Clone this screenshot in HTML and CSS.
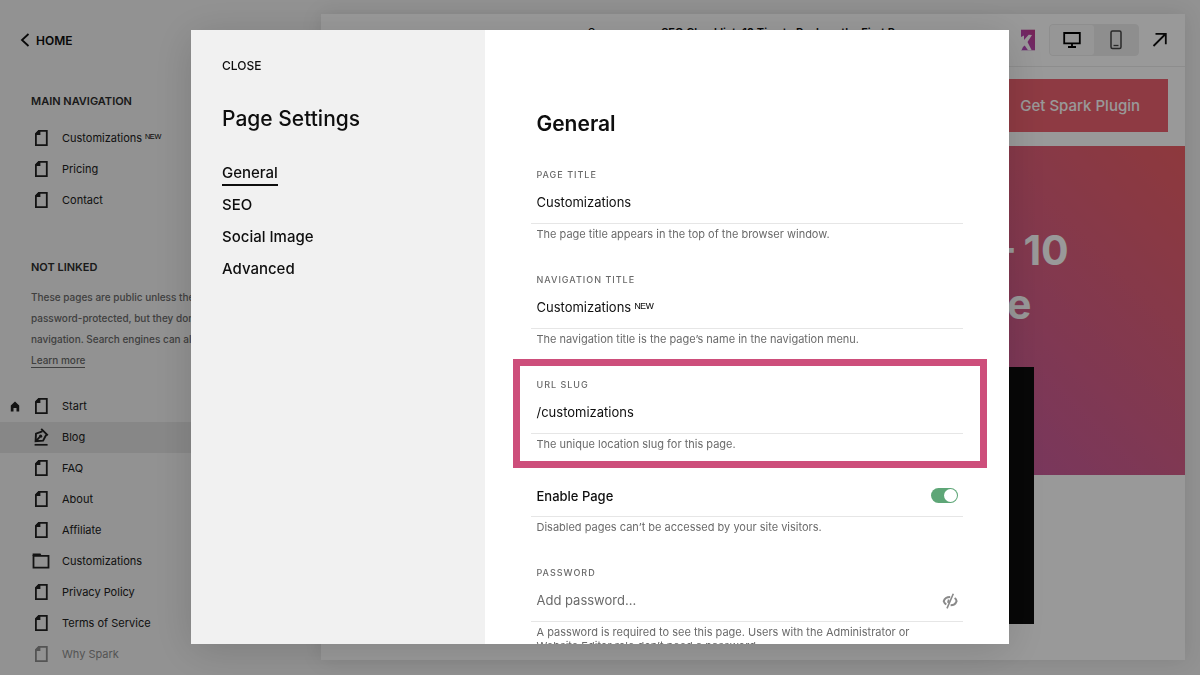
FILE: index.html
```html
<!DOCTYPE html>
<html lang="en">
<head>
  <meta charset="UTF-8" />
  <meta name="viewport" content="width=device-width, initial-scale=1" />
  <title>Page Settings</title>
  <link rel="stylesheet" href="styles.css">
</head>
<body>
  <!-- Icons shared by the page list -->
  <svg class="sprite" aria-hidden="true">
    <symbol id="icon-page" viewBox="0 0 18 18">
      <path d="M7 1.800h7.800v14.400H3.900V5z" fill="none" stroke="currentColor" stroke-width="1.800" />
      <path d="M6.500.9h1.900v5H3V4.400z" fill="currentColor" />
    </symbol>
    <symbol id="icon-folder" viewBox="0 0 18 18">
      <path d="M1.500 3.800h15v11.900h-15z" fill="none" stroke="currentColor" stroke-width="1.800" />
      <path d="M.6 1.600h7.900l1.300 2.500H.6z" fill="currentColor" />
    </symbol>
    <symbol id="icon-blog" viewBox="0 0 18 18">
      <path d="M2.600 16.800h13" stroke="currentColor" stroke-width="1.700" />
      <path d="M9.200.8l6.600 6.600M10.300 3.400L4 5.600l-.4 7.700 7.500-.6 3-5.700M3.600 13.300l4-4.200" fill="none" stroke="currentColor" stroke-width="1.900" />
      <circle cx="8.600" cy="8.200" r="1.600" fill="currentColor" />
    </symbol>
  </svg>

  <div class="app">
    <aside class="sidebar">
      <a class="home-link" href="#">
        <svg viewBox="0 0 10 14" width="10" height="14"><path d="M8.500 1L2 7l6.500 6" fill="none" stroke="currentColor" stroke-width="1.800" /></svg>
        HOME
      </a>

      <h2 class="sidebar-heading">MAIN NAVIGATION</h2>
      <ul class="page-list">
        <li><a href="#"><svg class="icon"><use href="#icon-page" /></svg>Customizations ᴺᴱᵂ</a></li>
        <li><a href="#"><svg class="icon"><use href="#icon-page" /></svg>Pricing</a></li>
        <li><a href="#"><svg class="icon"><use href="#icon-page" /></svg>Contact</a></li>
      </ul>

      <h2 class="sidebar-heading">NOT LINKED</h2>
      <p class="sidebar-note">
        These pages are public unless they’re<br>
        password-protected, but they don’t show in<br>
        navigation. Search engines can also find them.<br>
        <a href="#">Learn more</a>
      </p>
      <ul class="page-list">
        <li class="is-home">
          <a href="#">
            <svg class="home-mark" viewBox="0 0 10 11"><path d="M5 .5L9.200 4.500V10.500H6.500V7H3.500v3.500H.8V4.500z" fill="currentColor" /></svg>
            <svg class="icon"><use href="#icon-page" /></svg>Start
          </a>
        </li>
        <li class="active"><a href="#"><svg class="icon"><use href="#icon-blog" /></svg>Blog</a></li>
        <li><a href="#"><svg class="icon"><use href="#icon-page" /></svg>FAQ</a></li>
        <li><a href="#"><svg class="icon"><use href="#icon-page" /></svg>About</a></li>
        <li><a href="#"><svg class="icon"><use href="#icon-page" /></svg>Affiliate</a></li>
        <li><a href="#"><svg class="icon"><use href="#icon-folder" /></svg>Customizations</a></li>
        <li><a href="#"><svg class="icon"><use href="#icon-page" /></svg>Privacy Policy</a></li>
        <li><a href="#"><svg class="icon"><use href="#icon-page" /></svg>Terms of Service</a></li>
        <li class="disabled"><a href="#"><svg class="icon"><use href="#icon-page" /></svg>Why Spark</a></li>
      </ul>
    </aside>

    <main class="preview">
      <header class="preview-bar">
        <p class="preview-title"><span>Squarespace</span><strong>SEO Checklist: 10 Tips to Rank on the First Page</strong></p>
        <svg class="avatar" viewBox="0 0 16 22" width="16" height="22">
          <defs>
            <linearGradient id="avatar-fill" x1="0" y1="1" x2="1" y2="0">
              <stop offset="0" stop-color="#b04fc4" />
              <stop offset="1" stop-color="#c8398c" />
            </linearGradient>
          </defs>
          <path d="M1 .7h14v20.600H1z" fill="url(#avatar-fill)" />
          <path d="M1 8l3-1.500V11l4.700-5.300L12 6l-4.500 7 4.200 8.300H8l-3.300-4.800L3 18l-1.500 3.300H0V12z" fill="#fff" />
        </svg>
        <div class="device-toggle">
          <button type="button" class="selected" aria-label="Desktop">
            <svg viewBox="0 0 18 18" width="18" height="18"><path d="M1.200 2h15.600v10.400H1.200zM9 12v4M5 16h8" fill="none" stroke="currentColor" stroke-width="1.800" /></svg>
          </button>
          <button type="button" aria-label="Mobile">
            <svg viewBox="0 0 12 20" width="12" height="20"><rect x="1" y="1" width="10" height="17.500" rx="1.500" fill="none" stroke="currentColor" stroke-width="1.500" /><path d="M3.500 15.500h5" stroke="currentColor" stroke-width="1.300" /></svg>
          </button>
        </div>
        <button type="button" class="expand" aria-label="Open site">
          <svg viewBox="0 0 16 16" width="16" height="16"><path d="M1.500 14L13.500 2M3.500 1.800h10.300v10.400" fill="none" stroke="currentColor" stroke-width="1.800" /></svg>
        </button>
      </header>
      <div class="site-header"><a class="cta" href="#">Get Spark Plugin</a></div>
      <section class="hero">
        <h1>The Ultimate SEO Checklist – 10<br>Tips to Rank on the 1st Page</h1>
      </section>
      <div class="video"></div>
    </main>
  </div>

  <div class="overlay">
    <div class="modal" role="dialog" aria-label="Page Settings">
      <div class="modal-side">
        <button type="button" class="close">CLOSE</button>
        <h2>Page Settings</h2>
        <nav>
          <a class="current" href="#">General</a>
          <a href="#">SEO</a>
          <a href="#">Social Image</a>
          <a href="#">Advanced</a>
        </nav>
      </div>

      <form class="modal-main">
        <h2>General</h2>

        <div class="field">
          <label for="page-title">PAGE TITLE</label>
          <input type="text" id="page-title" value="Customizations">
          <p class="help">The page title appears in the top of the browser window.</p>
        </div>

        <div class="field">
          <label for="nav-title">NAVIGATION TITLE</label>
          <input type="text" id="nav-title" value="Customizations ᴺᴱᵂ">
          <p class="help">The navigation title is the page’s name in the navigation menu.</p>
        </div>

        <div class="field highlight">
          <label for="url-slug">URL SLUG</label>
          <input type="text" id="url-slug" value="/customizations">
          <p class="help">The unique location slug for this page.</p>
        </div>

        <div class="field">
          <div class="switch-row">
            <label for="enable-page">Enable Page</label>
            <input type="checkbox" id="enable-page" checked>
          </div>
          <p class="help">Disabled pages can’t be accessed by your site visitors.</p>
        </div>

        <div class="field">
          <label for="password">PASSWORD</label>
          <div class="password-row">
            <input type="password" id="password" placeholder="Add password...">
            <button type="button" aria-label="Show password">
              <svg viewBox="0 0 16 16" width="16" height="16"><path d="M8.200 4C4.500 4 2.300 6.200 1.700 8.200c.5 1.500 1.300 2.500 2.600 3.300M12.600 5c1.200.8 1.800 1.900 2 3.100-.9 2.600-3.200 4.200-6 4.200" fill="none" stroke="currentColor" stroke-width="2" /><path d="M11.300.8L5 15.400M6.700 6.500L5.800 9.800" fill="none" stroke="currentColor" stroke-width="1.600" /></svg>
            </button>
          </div>
          <p class="help">A password is required to see this page. Users with the Administrator or<br>Website Editor role don’t need a password.</p>
        </div>
      </form>
    </div>
  </div>
</body>
</html>
```

FILE: styles.css
```css
:root {
  --text: #0e0e0e;
  --muted: #6a6a6a;
  --line: #e6e6e6;
  --panel: #f1f1f1;
  --pink: #cd4e7b;
  --green: #5ea677;
}

* {
  box-sizing: border-box;
  margin: 0;
  padding: 0;
}

body {
  font-family: Inter, "Liberation Sans", sans-serif;
  color: var(--text);
  background: #f3f3f3;
  height: 100vh;
  overflow: hidden;
}

a {
  color: inherit;
  text-decoration: none;
}

button {
  font: inherit;
  color: inherit;
  background: none;
  border: 0;
}

.sprite {
  display: none;
}

.app {
  display: grid;
  grid-template-columns: 321px 1fr;
  height: 100vh;
}

/* Sidebar */
.sidebar {
  padding-top: 32px;
  overflow: hidden;
}

.home-link {
  display: flex;
  align-items: center;
  gap: 6px;
  height: 16px;
  padding-left: 20px;
  font-size: 12px;
  font-weight: 600;
}

.sidebar-heading {
  margin-top: 45px;
  padding-left: 31px;
  font-size: 11px;
  font-weight: 600;
  line-height: 16px;
  color: #2c2c2c;
}

.page-list {
  margin-top: 14px;
  list-style: none;
}

.page-list a {
  display: flex;
  align-items: center;
  height: 31px;
  padding: 0 0 1px 32px;
  font-size: 11px;
  color: #202020;
}

.page-list + .sidebar-heading {
  margin-top: 43px;
}

.icon {
  width: 18px;
  height: 18px;
  margin-right: 12px;
}

.page-list .is-home a {
  padding-left: 10px;
}

.home-mark {
  width: 10px;
  height: 11px;
  margin-right: 12px;
}

.page-list .active {
  background: #e2e2e2;
}

.page-list .disabled a {
  color: #8c8c8c;
}

.sidebar-note {
  margin-top: 12px;
  padding-left: 31px;
  font-size: 10px;
  font-weight: 500;
  line-height: 21px;
  color: #6a6a6a;
  white-space: nowrap;
}

.sidebar-note a {
  padding-bottom: 1px;
  border-bottom: 1px solid;
}

.sidebar-note + .page-list {
  margin-top: 20px;
}

/* Site preview */
.preview {
  margin: 14px 15px 15px 0;
  background: #fff;
  box-shadow: 0 0 20px rgba(0, 0, 0, 0.1);
  overflow: hidden;
}

.preview-bar {
  display: flex;
  align-items: center;
  justify-content: flex-end;
  height: 53px;
  padding-right: 17px;
  border-bottom: 1px solid #ebebeb;
}

.preview-title {
  display: flex;
  flex: 1;
  align-self: flex-start;
  gap: 4px;
  padding: 10px 0 0 267px;
  font-size: 11px;
  font-weight: 500;
  line-height: 16px;
  white-space: nowrap;
}

.preview-title strong {
  font-weight: 600;
}

.device-toggle {
  display: flex;
  margin: 0 13px;
  border: 1px solid #ededed;
  border-radius: 4px;
  background: #ededed;
}

.device-toggle button {
  display: flex;
  align-items: center;
  justify-content: center;
  width: 44px;
  height: 30px;
  color: #444;
}

.device-toggle .selected {
  background: #fbfbfb;
  border-radius: 3px;
  color: #000;
}

.expand {
  display: flex;
}

.site-header {
  display: flex;
  justify-content: flex-end;
  padding: 12px 17px 14px;
}

.cta {
  padding: 0 28px;
  background: #ed6270;
  color: #fff;
  font-size: 15px;
  font-weight: 500;
  line-height: 53px;
}

.hero {
  height: 329px;
  padding-top: 77px;
  background: linear-gradient(45deg, #c85d9d 58%, #ed6066);
  color: #fff;
  text-align: center;
}

.hero h1 {
  font-size: 41px;
  line-height: 54px;
}

.video {
  width: 65%;
  height: 257px;
  margin: -108px auto 0;
  background: #0c0c0c;
}

/* Modal */
.overlay {
  position: fixed;
  inset: 0;
  display: flex;
  padding: 30px 191px 31px;
  background: rgba(0, 0, 0, 0.4);
}

.modal {
  display: flex;
  flex: 1;
  background: #fff;
  box-shadow: 0 6px 40px rgba(0, 0, 0, 0.15);
  overflow: hidden;
}

.modal-side {
  width: 36%;
  padding: 28px 31px;
  background: var(--panel);
}

.close {
  display: block;
  font-size: 12px;
  font-weight: 500;
  line-height: 16px;
}

.modal h2 {
  font-size: 21px;
  font-weight: 600;
  line-height: 24px;
}

.modal .modal-side h2 {
  margin-top: 33px;
  font-weight: 500;
}

.modal-side nav {
  display: flex;
  flex-direction: column;
  align-items: flex-start;
  gap: 8px;
  margin-top: 31px;
}

.modal-side nav a {
  font-size: 15px;
  font-weight: 500;
  line-height: 22px;
  border-bottom: 2px solid transparent;
}

.modal-side nav .current {
  border-color: var(--text);
}

.modal-main {
  flex: 1;
  padding: 82px 46px 0;
}

.modal-main h2 {
  padding-left: 5px;
  margin-bottom: 33px;
}

.field {
  position: relative;
  margin-bottom: 33px;
}

.field label {
  display: block;
  padding-left: 5px;
  font-size: 9px;
  font-weight: 500;
  line-height: 12px;
  letter-spacing: 1px;
  color: var(--muted);
}

.field input[type="text"],
.field input[type="password"] {
  display: block;
  width: 100%;
  height: 43px;
  padding: 0 5px;
  border: 0;
  border-bottom: 1px solid var(--line);
  background: none;
  font: inherit;
  font-size: 13px;
  color: var(--text);
}

.field input::placeholder {
  color: var(--muted);
}

.help {
  margin-top: 3px;
  padding: 0 5px;
  font-size: 11px;
  line-height: 14px;
  color: var(--muted);
}

.highlight::after {
  content: "";
  position: absolute;
  inset: -20px -24px -17px -18px;
  border: 7px solid var(--pink);
  pointer-events: none;
}

.switch-row {
  display: flex;
  align-items: center;
  justify-content: space-between;
  height: 33px;
  padding: 0 5px 9px 0;
  border-bottom: 1px solid var(--line);
}

.switch-row label {
  font-size: 13px;
  letter-spacing: 0;
  color: var(--text);
}

.switch-row input {
  display: flex;
  justify-content: flex-end;
  width: 27px;
  height: 15px;
  padding: 1px;
  border-radius: 8px;
  background: var(--green);
  appearance: none;
}

.switch-row input::before {
  content: "";
  width: 13px;
  height: 13px;
  border-radius: 50%;
  background: #fff;
}

.switch-row input:not(:checked) {
  justify-content: flex-start;
  background: #bbb;
}

.password-row {
  position: relative;
}

.password-row button {
  position: absolute;
  top: 14px;
  right: 5px;
  display: flex;
  color: #8a8a8a;
}
```
